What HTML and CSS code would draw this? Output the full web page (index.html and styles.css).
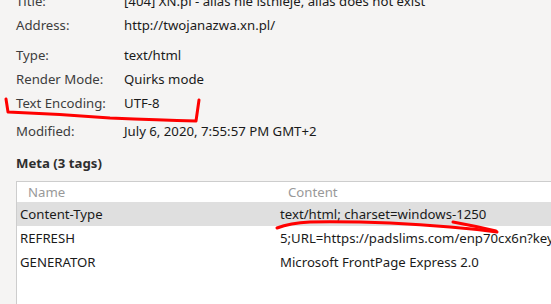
FILE: index.html
```html
<!DOCTYPE html>
<html>
	<head>
		<meta charset="UTF-8">
		<title>Page Info</title>
		<link rel="stylesheet" href="styles.css">
	</head>
	<body>
		<div class="page">
			<div class="info">
				<div class="label">Title:</div>
				<div class="value">[404] XN.pl - alias nie istnieje, alias does not exist</div>
				<div class="label">Address:</div>
				<div class="value">http://twojanazwa.xn.pl/</div>
			</div>
			<div class="info group">
				<div class="label">Type:</div>
				<div class="value">text/html</div>
				<div class="label">Render Mode:</div>
				<div class="value">Quirks mode</div>
				<div class="label">Text Encoding:</div>
				<div class="value">UTF-8</div>
			</div>
			<div class="info modified">
				<div class="label">Modified:</div>
				<div class="value">July 6, 2020, 7:55:57 PM GMT+2</div>
			</div>

			<h3 class="meta-title">Meta (3 tags)</h3>
			<div class="meta-table">
				<div class="meta-row head">
					<div class="col-name">Name</div>
					<div class="col-content">Content</div>
				</div>
				<div class="meta-row selected">
					<div class="col-name">Content-Type</div>
					<div class="col-content">text/html; charset=windows-1250</div>
				</div>
				<div class="meta-row">
					<div class="col-name">REFRESH</div>
					<div class="col-content">5;URL=https://padslims.com/enp70cx6n?key=</div>
				</div>
				<div class="meta-row">
					<div class="col-name">GENERATOR</div>
					<div class="col-content">Microsoft FrontPage Express 2.0</div>
				</div>
			</div>
		</div>

		<!-- red marker scribbles over the screenshot -->
		<svg class="marks" width="551" height="304" viewBox="0 0 551 304">
			<path d="M6 99 L8 112 Q60 114 110 118 Q160 120 196 121 L199 100" />
			<path d="M277 228 Q290 223 310 222 Q380 221 450 227 Q475 229 497 232" />
			<path d="M453 222 Q475 226 496 231" />
		</svg>
	</body>
</html>
```

FILE: styles.css
```css
* {
	margin: 0;
	padding: 0;
	box-sizing: border-box;
}

body {
	background: #f5f4f3;
	font-family: "Noto Sans", sans-serif;
	font-size: 13.2px;
	color: #1a1a1a;
	overflow: hidden;
}

.page {
	margin-top: -11px;
	padding-left: 16px;
}

.info {
	display: grid;
	grid-template-columns: 108px 1fr;
	grid-auto-rows: 24px;
	align-items: center;
}

.info .label {
	color: #3d3d3d;
	white-space: nowrap;
}

.info .value {
	white-space: nowrap;
}

.group {
	margin-top: 6px;
}

.modified {
	margin-top: 4px;
}

.meta-title {
	font-size: 13.2px;
	font-weight: bold;
	color: #2e2e2e;
	margin-top: 8px;
	height: 24px;
	line-height: 24px;
}

.meta-table {
	margin-top: 6px;
	background: #fff;
	border: 1px solid #cdcdcd;
	border-right: none;
	width: 600px;
	height: 140px;
}

.meta-row {
	display: flex;
	height: 24px;
	align-items: center;
	white-space: nowrap;
}

.meta-row.head {
	height: 20px;
	color: #999;
}

.meta-row.selected {
	background: #dfdfdf;
}

.col-name {
	width: 263px;
	padding-left: 3px;
}

.col-content {
	flex: 1;
}

.head .col-name {
	padding-left: 11px;
}

.head .col-content {
	padding-left: 8px;
}

.marks {
	position: absolute;
	top: 0;
	left: 0;
	pointer-events: none;
}

.marks path {
	fill: none;
	stroke: #f00;
	stroke-width: 3;
	stroke-linecap: round;
	stroke-linejoin: round;
}
```
